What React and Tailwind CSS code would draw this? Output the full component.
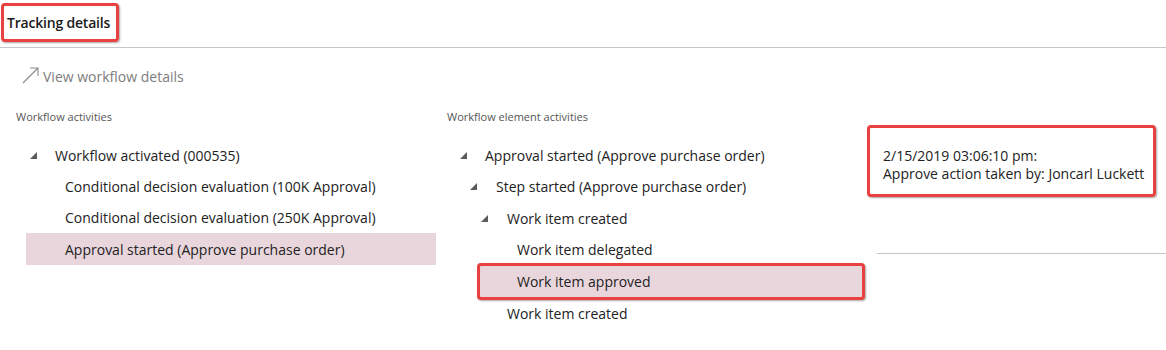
import React from "react";

const Tri = () => (
  <svg width="7" height="7" viewBox="0 0 7 7" className="block">
    <polygon points="7,0 7,7 0,7" fill="#5a5a5a" />
  </svg>
);

const font = { fontFamily: '"Open Sans", "Noto Sans", sans-serif' };

export default function App() {
  return (
    <div className="w-[1166px] h-[350px] bg-white text-[#222] overflow-hidden" style={font}>
      {/* Header */}
      <div className="h-[48px] border-b border-[#c6c6c6] pt-[3px] pl-[1px]">
        <div className="w-[118px] h-[39px] border-[3px] border-[#e8413f] rounded-[4px] shadow-[1px_1px_2px_rgba(0,0,0,0.35)] flex items-center pl-[3px]">
          <span className="text-[14px] font-semibold text-[#1a1a1a] tracking-[-0.2px]">Tracking details</span>
        </div>
      </div>

      {/* View workflow details */}
      <div className="h-[56px] flex items-center pl-[22px] text-[#7d7d7d]">
        <svg width="17" height="17" viewBox="0 0 17 17" className="block mr-[4px] mt-[-2px]">
          <path d="M1 16 L16 1 M8 1 H16 V9" stroke="#8a8a8a" strokeWidth="1.1" fill="none" />
        </svg>
        <span className="text-[14px]">View workflow details</span>
      </div>

      <div className="flex">
        {/* Left column */}
        <div className="w-[447px] pl-[16px] shrink-0">
          <div className="h-[26px] mb-[10px] flex items-center text-[11px] text-[#555]">Workflow activities</div>
          <div className="text-[14px]">
            <div className="h-[31px] flex items-center ml-[10px] w-[410px] pl-[4px]">
              <span className="w-[25px]"><Tri /></span>
              <span>Workflow activated (000535)</span>
            </div>
            <div className="h-[31px] flex items-center ml-[10px] w-[410px] pl-[39px]">
              Conditional decision evaluation (100K Approval)
            </div>
            <div className="h-[31px] flex items-center ml-[10px] w-[410px] pl-[39px]">
              Conditional decision evaluation (250K Approval)
            </div>
            <div className="h-[32px] flex items-center ml-[10px] w-[410px] pl-[39px] bg-[#e9d6dd]">
              Approval started (Approve purchase order)
            </div>
          </div>
        </div>

        {/* Middle column */}
        <div className="w-[420px] shrink-0">
          <div className="h-[26px] mb-[10px] flex items-center text-[11px] text-[#555]">Workflow element activities</div>
          <div className="ml-[10px] text-[14px]">
            <div className="h-[31px] flex items-center pl-[3px]">
              <span className="w-[25px]"><Tri /></span>
              <span>Approval started (Approve purchase order)</span>
            </div>
            <div className="h-[31px] flex items-center pl-[13px]">
              <span className="w-[26px]"><Tri /></span>
              <span>Step started (Approve purchase order)</span>
            </div>
            <div className="h-[32px] flex items-center pl-[24px]">
              <span className="w-[26px]"><Tri /></span>
              <span>Work item created</span>
            </div>
            <div className="h-[31px] flex items-center pl-[60px]">Work item delegated</div>
            <div className="h-[37px] -mt-[2px] -mb-[3px] ml-[20px] w-[388px] flex items-center pl-[37px] bg-[#e9d6dd] border-[3px] border-[#e8413f] rounded-[4px] shadow-[1px_1px_2px_rgba(0,0,0,0.35)] relative">
              Work item approved
            </div>
            <div className="h-[32px] flex items-center pl-[50px]">Work item created</div>
          </div>
        </div>

        {/* Right column */}
        <div className="flex-1 pt-[21px]">
          <div className="w-[289px] h-[72px] border-[3px] border-[#e8413f] rounded-[4px] shadow-[1px_1px_2px_rgba(0,0,0,0.35)] pl-[13px] pt-[19px] text-[14px] leading-[18px]">
            <div>2/15/2019 03:06:10 pm:</div>
            <div>Approve action taken by: Joncarl Luckett</div>
          </div>
          <div className="ml-[10px] mt-[56px] border-b border-[#c6c6c6]"></div>
        </div>
      </div>
    </div>
  );
}
